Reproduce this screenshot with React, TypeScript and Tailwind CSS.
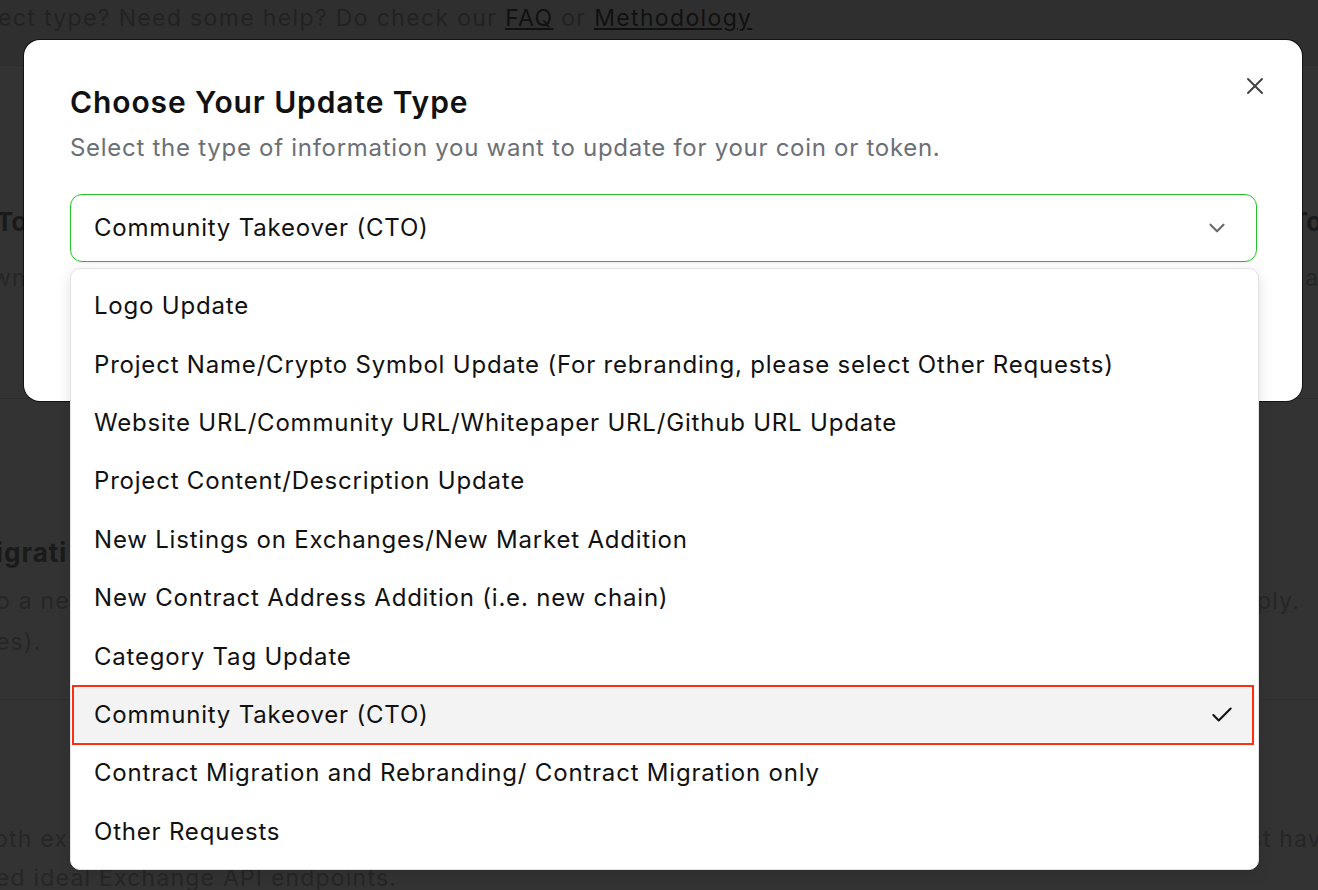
import { Check, ChevronDown, X } from "lucide-react"

const options = [
  "Logo Update",
  "Project Name/Crypto Symbol Update (For rebranding, please select Other Requests)",
  "Website URL/Community URL/Whitepaper URL/Github URL Update",
  "Project Content/Description Update",
  "New Listings on Exchanges/New Market Addition",
  "New Contract Address Addition (i.e. new chain)",
  "Category Tag Update",
  "Community Takeover (CTO)",
  "Contract Migration and Rebranding/ Contract Migration only",
  "Other Requests",
]

const selected = "Community Takeover (CTO)"

export default function App() {
  return (
    <div className="relative h-[890px] w-full overflow-hidden bg-[#333333] font-['Inter','Noto_Sans',sans-serif]">
      {/* Page behind the overlay */}
      <div className="h-[66px] border-b border-[#2c2c2c] bg-[#2f2f2f] pt-[3px]">
        <p className="-ml-[2px] text-[23px] leading-[30px] tracking-[1.35px] text-[#222]">
          ect type? Need some help? Do check our{" "}
          <span className="text-[#111] underline">FAQ</span> or{" "}
          <span className="text-[#111] underline">Methodology</span>
        </p>
      </div>

      <div className="flex h-[333px] justify-between border-b border-[#2c2c2c] pt-[136px]">
        <div className="-ml-[4px] flex flex-col gap-5">
          <span className="text-[26px] font-bold text-[#1a1a1a]">To</span>
          <span className="-ml-[4px] text-[23px] tracking-[1.2px] text-[#262626]">wn</span>
        </div>
        <div className="-mr-[4px] flex flex-col gap-5">
          <span className="text-[26px] font-bold text-[#1a1a1a]">To</span>
          <span className="text-[23px] tracking-[1.2px] text-[#262626]">ca</span>
        </div>
      </div>

      <div className="flex h-[301px] flex-col border-b border-[#2c2c2c] pt-[134px]">
        <span className="-ml-[4px] text-[26px] font-bold tracking-[1px] text-[#1a1a1a]">igrati</span>
        <div className="mt-3 flex justify-between text-[23px] tracking-[1.2px] text-[#262626]">
          <span className="-ml-[4px]">o a ne</span>
          <span className="mr-[18px]">ply.</span>
        </div>
        <span className="-ml-[4px] mt-[6px] text-[23px] tracking-[1.2px] text-[#262626]">es).</span>
      </div>

      <div className="flex flex-col pt-[122px] text-[23px] tracking-[1.2px] text-[#262626]">
        <div className="flex justify-between">
          <span className="-ml-[6px]">oth ex</span>
          <span className="-mr-[4px]">st hav</span>
        </div>
        <span className="-ml-[4px] mt-[4px]">ed ideal Exchange API endpoints.</span>
      </div>

      {/* Modal */}
      <div className="absolute left-[24px] top-[40px] h-[361px] w-[1278px] rounded-[16px] bg-white px-[46px] pt-[44px] shadow-[0_0_0_1px_rgba(0,0,0,0.6)]">
        <button className="absolute right-[33px] top-[32px] text-[#444]">
          <X size={28} strokeWidth={1.7} />
        </button>
        <h2 className="text-[30px] font-semibold leading-[36px] tracking-[0.9px] text-[#111]">
          Choose Your Update Type
        </h2>
        <p className="mt-[14px] text-[24px] leading-[28px] tracking-[0.72px] text-[#6b6f76]">
          Select the type of information you want to update for your coin or token.
        </p>

        <div className="mt-[32px] flex h-[68px] w-[1187px] items-center justify-between rounded-[12px] border-[1.5px] border-[#27c027] pl-[23px] pr-[26px] shadow-[0_1px_2px_rgba(0,0,0,0.08)]">
          <span className="text-[24px] tracking-[0.8px] text-[#111]">{selected}</span>
          <ChevronDown size={26} strokeWidth={2} className="text-[#6b6b6b]" />
        </div>
      </div>

      {/* Dropdown list */}
      <div className="absolute left-[70px] top-[268px] w-[1189px] rounded-[10px] border border-[#e3e3e3] bg-white px-[3px] py-[8px] shadow-[0_4px_14px_rgba(0,0,0,0.12)]">
        {options.map((opt) => {
          const isSel = opt === selected
          return (
            <div key={opt} className="relative flex h-[58.4px] items-center py-[2px]">
              <div
                className={`flex h-full w-full items-center justify-between rounded-[6px] pl-[20px] pr-[20px] text-[24px] tracking-[0.8px] text-[#111] ${isSel ? "bg-[#f3f3f3]" : ""}`}
              >
                <span>{opt}</span>
                {isSel && <Check size={26} strokeWidth={1.9} className="text-[#111]" />}
              </div>
              {isSel && (
                <div className="pointer-events-none absolute -left-[2px] right-[1px] -top-[1px] -bottom-[1px] border-2 border-[#ff2d14]" />
              )}
            </div>
          )
        })}
      </div>
    </div>
  )
}
